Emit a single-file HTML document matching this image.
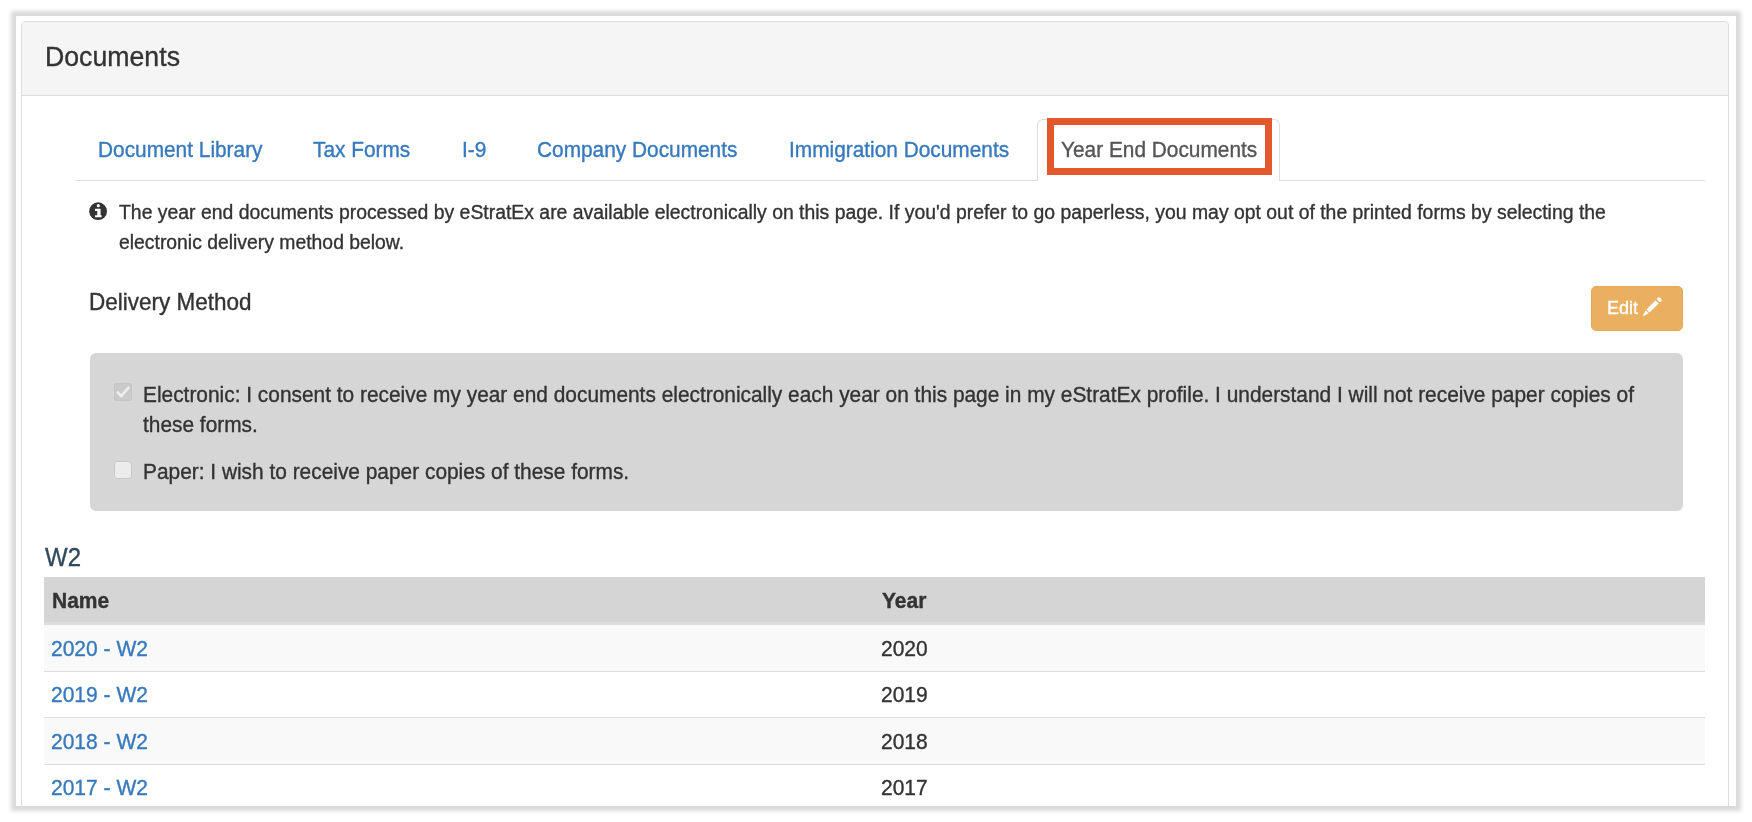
<!DOCTYPE html>
<html><head><meta charset="utf-8"><style>
html,body{margin:0;padding:0;background:#fff;width:1752px;height:822px;overflow:hidden;}
body{position:relative;font-family:"Liberation Sans",sans-serif;}
.t{position:absolute;white-space:nowrap;will-change:transform;-webkit-text-stroke:0.35px currentColor;}
.b{position:absolute;box-sizing:border-box;}
</style></head><body>
<div class="b" style="left:16px;top:16px;width:1720px;height:790px;background:#fff;box-shadow:0 0 4px 5px rgba(0,0,0,0.15);"></div>
<div class="b" style="left:16px;top:16px;width:1720px;height:790px;overflow:hidden;">
  <div class="b" style="left:5px;top:5px;width:1708px;height:900px;border:1px solid #dddddd;border-radius:4px 4px 0 0;background:#fff;"></div>
  <div class="b" style="left:6px;top:6px;width:1706px;height:74px;background:#f5f5f5;border-bottom:1px solid #dddddd;border-radius:3px 3px 0 0;"></div>
</div>
<!-- tab underline -->
<div class="b" style="left:75px;top:180px;width:1630px;height:1px;background:#dddddd;"></div>
<!-- active tab -->
<div class="b" style="left:1037px;top:119px;width:243px;height:62px;border:1px solid #dddddd;border-bottom:none;border-radius:6px 6px 0 0;background:#fff;"></div>
<!-- orange box -->
<div class="b" style="left:1047px;top:118px;width:225px;height:57px;border:7px solid #e2572b;"></div>
<!-- info icon -->
<svg class="b" style="left:89px;top:201.5px;" width="19" height="19" viewBox="0 0 19 19">
  <circle cx="9.1" cy="9.2" r="8.9" fill="#333"/>
  <circle cx="9.3" cy="3.7" r="1.6" fill="#fff"/>
  <path d="M6.05 6.8 H11.6 V13.3 H12.6 V15.3 H6.05 V13.3 H8.24 V8.9 H6.05 Z" fill="#fff"/>
</svg>
<!-- edit button -->
<div class="b" style="left:1591px;top:285.5px;width:92px;height:45px;background:#eaaf5f;border:1px solid #e6a754;border-radius:5px;"></div>
<svg class="b" style="left:1637.6px;top:293px;" width="28" height="28" viewBox="0 0 28 28">
  <g transform="rotate(45 14 14)" fill="#fff">
    <rect x="11.5" y="1.8" width="5" height="3.5" rx="1.75"/>
    <rect x="11.8" y="6.7" width="4.4" height="13"/>
    <path d="M11.8 20.8 L16.2 20.8 L14.3 26.4 L13.7 26.4 Z"/>
  </g>
</svg>
<!-- well -->
<div class="b" style="left:89.5px;top:353px;width:1593px;height:157.6px;background:#d6d6d6;border-radius:6px;"></div>
<!-- checkboxes -->
<div class="b" style="left:114px;top:383.3px;width:18px;height:18px;background:#cacaca;border:1px solid #c5c5c5;border-radius:2px;"></div>
<svg class="b" style="left:114px;top:383.3px;" width="18" height="18" viewBox="0 0 18 18"><path d="M3.8 9.5 L7.3 13 L14.5 4.7" stroke="#eeeeee" stroke-width="2.6" stroke-linecap="round" fill="none"/></svg>
<div class="b" style="left:114px;top:460.6px;width:18px;height:18px;background:#ececec;border:1px solid #c9c9c9;border-radius:3px;"></div>
<!-- table -->
<div class="b" style="left:44px;top:577px;width:1661px;height:48px;background:#d5d5d5;border-bottom:3px solid #dddddd;"></div>
<div class="b" style="left:44px;top:625px;width:1661px;height:46.5px;background:#f9f9f9;border-bottom:1px solid #dddddd;"></div>
<div class="b" style="left:44px;top:671.5px;width:1661px;height:46.5px;background:#ffffff;border-bottom:1px solid #dddddd;"></div>
<div class="b" style="left:44px;top:718px;width:1661px;height:46.5px;background:#f9f9f9;border-bottom:1px solid #dddddd;"></div>
<div class="b" style="left:44px;top:764.5px;width:1661px;height:41.5px;background:#ffffff;"></div>
<div class="t" style="left:44.50px;top:41.34px;font-size:26.7px;line-height:32px;color:#333333;font-weight:normal;transform-origin:0 25.26px;transform:scaleY(1.06);">Documents</div>
<div class="t" style="left:98.40px;top:136.87px;font-size:20.85px;line-height:25px;color:#3679bd;font-weight:normal;transform-origin:0 19.73px;transform:scaleY(1.06);">Document Library</div>
<div class="t" style="left:313.00px;top:136.87px;font-size:20.85px;line-height:25px;color:#3679bd;font-weight:normal;transform-origin:0 19.73px;transform:scaleY(1.06);">Tax Forms</div>
<div class="t" style="left:462.40px;top:136.87px;font-size:20.85px;line-height:25px;color:#3679bd;font-weight:normal;transform-origin:0 19.73px;transform:scaleY(1.06);">I-9</div>
<div class="t" style="left:536.80px;top:136.87px;font-size:20.85px;line-height:25px;color:#3679bd;font-weight:normal;transform-origin:0 19.73px;transform:scaleY(1.06);">Company Documents</div>
<div class="t" style="left:789.00px;top:136.87px;font-size:20.85px;line-height:25px;color:#3679bd;font-weight:normal;transform-origin:0 19.73px;transform:scaleY(1.06);">Immigration Documents</div>
<div class="t" style="left:1060.50px;top:136.87px;font-size:20.85px;line-height:25px;color:#555555;font-weight:normal;transform-origin:0 19.73px;transform:scaleY(1.06);">Year End Documents</div>
<div class="t" style="left:119.40px;top:200.77px;font-size:19.4px;line-height:23px;color:#333333;font-weight:normal;transform-origin:0 18.23px;transform:scaleY(1.06);">The year end documents processed by eStratEx are available electronically on this page. If you&#39;d prefer to go paperless, you may opt out of the printed forms by selecting the</div>
<div class="t" style="left:119.40px;top:231.28px;font-size:19.38px;line-height:23px;color:#333333;font-weight:normal;transform-origin:0 18.22px;transform:scaleY(1.06);">electronic delivery method below.</div>
<div class="t" style="left:89.10px;top:288.70px;font-size:22.5px;line-height:27px;color:#333333;font-weight:normal;transform-origin:0 21.30px;transform:scaleY(1.06);">Delivery Method</div>
<div class="t" style="left:1607.30px;top:297.16px;font-size:18px;line-height:22px;color:#ffffff;font-weight:normal;transform-origin:0 17.24px;transform:scaleY(1.06);">Edit</div>
<div class="t" style="left:142.50px;top:381.96px;font-size:20.88px;line-height:25px;color:#333333;font-weight:normal;transform-origin:0 19.74px;transform:scaleY(1.06);">Electronic: I consent to receive my year end documents electronically each year on this page in my eStratEx profile. I understand I will not receive paper copies of</div>
<div class="t" style="left:143.00px;top:411.56px;font-size:20.88px;line-height:25px;color:#333333;font-weight:normal;transform-origin:0 19.74px;transform:scaleY(1.06);">these forms.</div>
<div class="t" style="left:142.50px;top:458.96px;font-size:20.88px;line-height:25px;color:#333333;font-weight:normal;transform-origin:0 19.74px;transform:scaleY(1.06);">Paper: I wish to receive paper copies of these forms.</div>
<div class="t" style="left:44.70px;top:543.28px;font-size:24px;line-height:29px;color:#2f4a5d;font-weight:normal;transform-origin:0 22.82px;transform:scaleY(1.06);">W2</div>
<div class="t" style="left:52.00px;top:587.82px;font-size:21px;line-height:25px;color:#333333;font-weight:bold;transform-origin:0 19.78px;transform:scaleY(1.06);">Name</div>
<div class="t" style="left:881.70px;top:587.82px;font-size:21px;line-height:25px;color:#333333;font-weight:bold;transform-origin:0 19.78px;transform:scaleY(1.06);">Year</div>
<div class="t" style="left:51.20px;top:635.62px;font-size:21px;line-height:25px;color:#3679bd;font-weight:normal;transform-origin:0 19.78px;transform:scaleY(1.06);">2020 - W2</div>
<div class="t" style="left:881.00px;top:635.62px;font-size:21px;line-height:25px;color:#333333;font-weight:normal;transform-origin:0 19.78px;transform:scaleY(1.06);">2020</div>
<div class="t" style="left:51.20px;top:682.12px;font-size:21px;line-height:25px;color:#3679bd;font-weight:normal;transform-origin:0 19.78px;transform:scaleY(1.06);">2019 - W2</div>
<div class="t" style="left:881.00px;top:682.12px;font-size:21px;line-height:25px;color:#333333;font-weight:normal;transform-origin:0 19.78px;transform:scaleY(1.06);">2019</div>
<div class="t" style="left:51.20px;top:728.62px;font-size:21px;line-height:25px;color:#3679bd;font-weight:normal;transform-origin:0 19.78px;transform:scaleY(1.06);">2018 - W2</div>
<div class="t" style="left:881.00px;top:728.62px;font-size:21px;line-height:25px;color:#333333;font-weight:normal;transform-origin:0 19.78px;transform:scaleY(1.06);">2018</div>
<div class="t" style="left:51.20px;top:775.12px;font-size:21px;line-height:25px;color:#3679bd;font-weight:normal;transform-origin:0 19.78px;transform:scaleY(1.06);">2017 - W2</div>
<div class="t" style="left:881.00px;top:775.12px;font-size:21px;line-height:25px;color:#333333;font-weight:normal;transform-origin:0 19.78px;transform:scaleY(1.06);">2017</div>

</body></html>
